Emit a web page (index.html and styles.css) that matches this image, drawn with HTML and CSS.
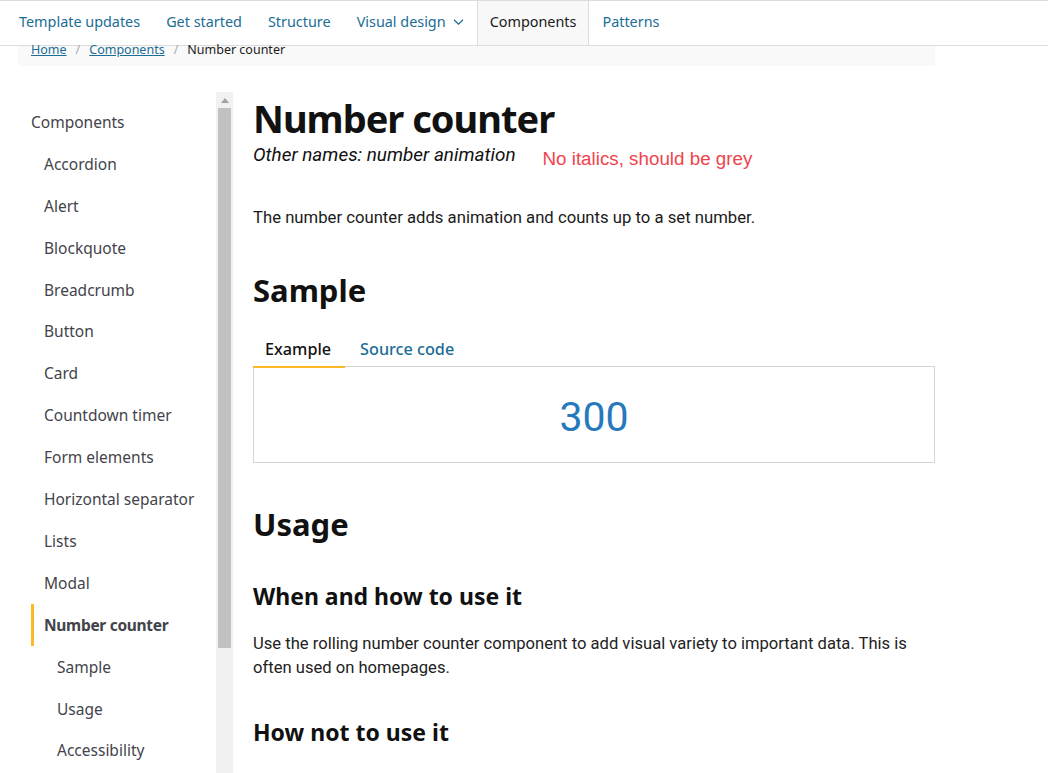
FILE: index.html
```html
<!DOCTYPE html>
<html lang="en">
<head>
<meta charset="utf-8">
<title>Number counter</title>
<link rel="stylesheet" href="styles.css">
</head>
<body>
<header class="topnav">
  <a class="nav-item" href="#">Template updates</a>
  <a class="nav-item" href="#">Get started</a>
  <a class="nav-item" href="#">Structure</a>
  <a class="nav-item" href="#">Visual design <svg class="chev" width="11" height="6" viewBox="0 0 11 6"><path d="M1 0.8l4.5 4.4 4.5-4.4" fill="none" stroke="currentColor" stroke-width="1.2"/></svg></a>
  <a class="nav-item active" href="#">Components</a>
  <a class="nav-item" href="#">Patterns</a>
</header>
<nav class="breadcrumb">
  <a href="#">Home</a><span class="sep">/</span><a href="#">Components</a><span class="sep">/</span><span class="current">Number counter</span>
</nav>
<div class="layout">
  <aside class="sidebar">
    <ul class="side-list">
      <li class="lvl0">Components</li>
      <li class="lvl1">Accordion</li>
      <li class="lvl1">Alert</li>
      <li class="lvl1">Blockquote</li>
      <li class="lvl1">Breadcrumb</li>
      <li class="lvl1">Button</li>
      <li class="lvl1">Card</li>
      <li class="lvl1">Countdown timer</li>
      <li class="lvl1">Form elements</li>
      <li class="lvl1">Horizontal separator</li>
      <li class="lvl1">Lists</li>
      <li class="lvl1">Modal</li>
      <li class="lvl1 current">Number counter</li>
      <li class="lvl2">Sample</li>
      <li class="lvl2">Usage</li>
      <li class="lvl2">Accessibility</li>
    </ul>
    <div class="scrollbar">
      <div class="sb-btn"><svg width="8" height="5" viewBox="0 0 8 5"><path d="M4 0L8 5H0z" fill="#a3a3a3"/></svg></div>
      <div class="sb-thumb"></div>
    </div>
  </aside>
  <main class="content">
    <h1 class="title">Number counter</h1>
    <div class="subtitle-row">
      <p class="other-names">Other names: number animation</p>
      <p class="note">No italics, should be grey</p>
    </div>
    <p class="lead">The number counter adds animation and counts up to a set number.</p>
    <h2 class="sample">Sample</h2>
    <div class="tabs">
      <span class="tab active">Example</span>
      <span class="tab">Source code</span>
    </div>
    <div class="tab-panel"><span class="counter">300</span></div>
    <h2 class="usage">Usage</h2>
    <h3>When and how to use it</h3>
    <p class="body">Use the rolling number counter component to add visual variety to important data. This is often used on homepages.</p>
    <h3>How not to use it</h3>
  </main>
</div>
</body>
</html>
```
FILE: styles.css
```css
html, body { margin: 0; padding: 0; }
body {
  font-family: "Noto Sans", "Liberation Sans", sans-serif;
  color: #1a1a1a;
  background: #fff;
  overflow: hidden;
  height: 773px;
}
a { text-decoration: none; }

.topnav {
  display: flex;
  height: 44px;
  border-top: 1px solid #dcdcdc;
  border-bottom: 1px solid #dcdcdc;
  padding-left: 6px;
}
.nav-item {
  display: flex;
  align-items: center;
  gap: 7px;
  padding: 0 13px 4px 13px;
  font-size: 14.4px;
  color: #1a6d94;
}
.nav-item .chev { margin-top: 2px; }
.nav-item.active {
  background: #f8f8f8;
  color: #1a1a1a;
  border-left: 1px solid #dcdcdc;
  border-right: 1px solid #dcdcdc;
  padding: 0 12px 4px 12px;
}

.breadcrumb {
  margin: 0 113px 0 18px;
  background: #f9f9f9;
  height: 20px;
  font-size: 12.5px;
  line-height: 8px;
  padding-left: 13px;
  display: flex;
  align-items: flex-start;
  color: #222;
}
.breadcrumb a { color: #1a6d94; text-decoration: underline; }
.breadcrumb .sep { color: #aaa; margin: 0 9px; }

.layout {
  display: flex;
  margin-top: 26px;
  margin-left: 18px;
}
.sidebar {
  display: flex;
  width: 215px;
  flex: none;
}
.side-list {
  list-style: none;
  margin: 0;
  padding: 19px 0 0 0;
  width: 198px;
  font-size: 15.5px;
  color: #43434b;
}
.side-list li {
  height: 41.9px;
  line-height: 22px;
  white-space: nowrap;
}
.side-list .lvl0 { padding-left: 13px; }
.side-list .lvl1 { padding-left: 26px; }
.side-list .lvl2 { padding-left: 39px; }
.side-list .current {
  font-weight: 700;
  letter-spacing: -0.3px;
  border-left: 3px solid #fbb829;
  margin-left: 13px;
  padding-left: 10px;
  height: 42px;
  line-height: 42px;
  margin-top: -10px;
  margin-bottom: 10px;
}
.scrollbar {
  width: 17px;
  background: #f1f1f1;
  height: 700px;
  flex: none;
}
.sb-btn {
  height: 16px;
  display: flex;
  align-items: center;
  justify-content: center;
}
.sb-thumb {
  height: 540px;
  margin: 0 2px;
  background: #c1c1c1;
}

.content {
  margin-left: 20px;
  width: 682px;
}
.title {
  font-size: 38px;
  letter-spacing: -1px;
  font-weight: 700;
  margin: 0;
  line-height: 52px;
  color: #111;
}
.subtitle-row {
  display: flex;
  gap: 27px;
  margin-top: -1px;
}
.other-names {
  margin: 0;
  font-family: "Roboto", "Liberation Sans", sans-serif;
  font-style: italic;
  font-size: 18.9px;
  line-height: 24px;
  color: #111;
}
.note {
  margin: 4px 0 0 0;
  font-family: "Liberation Sans", "Roboto", sans-serif;
  font-size: 18.8px;
  line-height: 24px;
  color: #f0434b;
}
.lead {
  margin: 35px 0 0 0;
  font-family: "Roboto", "Liberation Sans", sans-serif;
  font-size: 16.7px;
  line-height: 24px;
  color: #1a1a1a;
}
h2 {
  font-size: 31px;
  font-weight: 700;
  margin: 0;
  line-height: 40px;
  color: #111;
}
h2.sample { margin-top: 40px; }
.tabs {
  display: flex;
  margin-top: 28px;
}
.tab {
  font-size: 16.2px;
  line-height: 22px;
  padding: 0 14px 6px 12px;
  color: #1a6d94;
  font-weight: 500;
}
.tab + .tab { padding-left: 0; }
.tab.active {
  color: #111;
  border-bottom: 2px solid #fbb829;
  margin-right: 14px;
  padding-right: 14px;
}
.tab.active + .tab { margin-left: -14px; padding-left: 15px; }
.tab-panel {
  box-sizing: border-box;
  border: 1px solid #d5d5d5;
  margin-top: -2px;
  height: 97px;
  padding-top: 5px;
  display: flex;
  align-items: center;
  justify-content: center;
}
.counter {
  font-family: "Roboto", "Liberation Sans", sans-serif;
  font-size: 41px;
  color: #2779bd;
}
h2.usage { margin-top: 41px; }
h3 {
  font-size: 23px;
  font-weight: 700;
  margin: 36px 0 0 0;
  line-height: 32px;
  color: #111;
}
.body {
  margin: 20px 0 0 0;
  font-family: "Roboto", "Liberation Sans", sans-serif;
  font-size: 16.6px;
  line-height: 24px;
  color: #222;
}
```
